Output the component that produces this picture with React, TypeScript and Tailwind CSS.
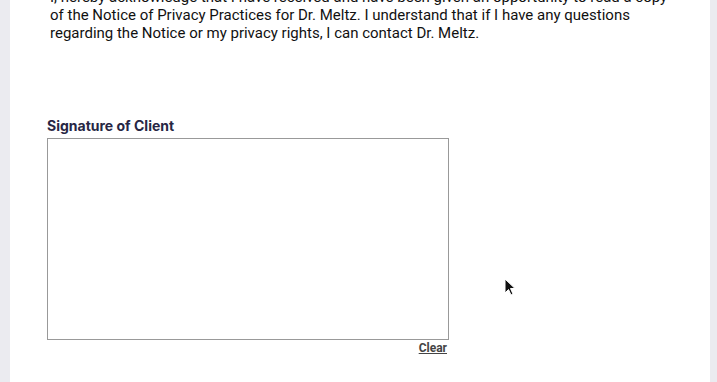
export default function App() {
  return (
    <div className="w-[717px] h-[382px] overflow-hidden bg-[#ebebf0] flex">
      <div className="ml-[10px] w-[700px] h-full bg-white relative">
        <div
          className="pl-[40px] pr-[10px] -mt-[12px] text-[15px] leading-[18px] text-[#111] whitespace-nowrap"
          style={{ fontFamily: 'Roboto, sans-serif' }}
        >
          <p>I, hereby acknowledge that I have received and have been given an opportunity to read a copy</p>
          <p>of the Notice of Privacy Practices for Dr. Meltz. I understand that if I have any questions</p>
          <p>regarding the Notice or my privacy rights, I can contact Dr. Meltz.</p>
        </div>
        <div className="pl-[37px] mt-[75px]" style={{ fontFamily: "Inter, sans-serif" }}>
          <div className="text-[14px] leading-[18px] font-bold text-[#272644]">Signature of Client</div>
          <div className="mt-[3px] w-[402px] h-[202px] border border-[#999]" />
          <div className="w-[400px] flex justify-end -mt-[1px]">
            <span className="text-[12px] font-bold underline text-[#444]" style={{ fontFamily: "Roboto, sans-serif" }}>Clear</span>
          </div>
        </div>
        <svg className="absolute left-[494px] top-[278px]" width="12" height="19" viewBox="0 0 12 19">
          <path d="M1 1 L1 15 L4.5 11.5 L7 17 L9 16 L6.5 10.5 L11 10.5 Z" fill="#111" stroke="#fff" strokeWidth="1" />
        </svg>
      </div>
    </div>
  );
}
